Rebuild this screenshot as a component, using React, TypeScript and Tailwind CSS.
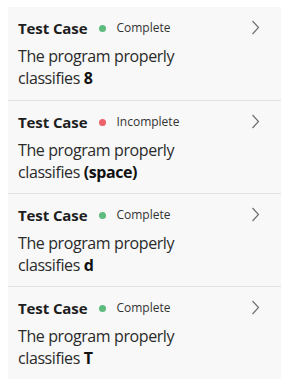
const cases = [
  { ok: true, target: '8' },
  { ok: false, target: '(space)' },
  { ok: true, target: 'd' },
  { ok: true, target: 'T' },
];

function Chevron() {
  return (
    <svg width="9" height="15" viewBox="0 0 9 15" className="mt-[2px] shrink-0">
      <polyline points="1.5,1 7.5,7.5 1.5,14" fill="none" stroke="#6f6f6f" strokeWidth="1.2" />
    </svg>
  );
}

export default function App() {
  return (
    <div className="h-[390px] w-[283px] bg-white pl-2 pt-[7px] font-['Open_Sans',sans-serif]">
      <div className="w-[273px] bg-[#f8f8f8]">
        {cases.map((c, i) => (
          <div
            key={i}
            className={`flex h-[93px] items-start pl-[10px] pr-[21px] pt-[11px] ${i > 0 ? 'border-t border-[#e3e3e3]' : ''}`}
          >
            <div className="flex-1">
              <div className="flex h-5 items-center">
                <span className="text-[15px] font-bold tracking-[-0.1px] text-[#1e1e1e]">Test Case</span>
                <span
                  className={`ml-[12px] h-[7px] w-[7px] rounded-full ${c.ok ? 'bg-[#5dbb7d]' : 'bg-[#ec6268]'}`}
                />
                <span className="ml-[10px] text-[12px] text-[#333]">{c.ok ? 'Complete' : 'Incomplete'}</span>
              </div>
              <p className="mt-[7px] text-[16px] leading-[22px] tracking-[-0.4px] text-[#2a2a2a]">
                The program properly
                <br />
                classifies <b className="font-bold text-[#111]">{c.target}</b>
              </p>
            </div>
            <Chevron />
          </div>
        ))}
      </div>
    </div>
  );
}
